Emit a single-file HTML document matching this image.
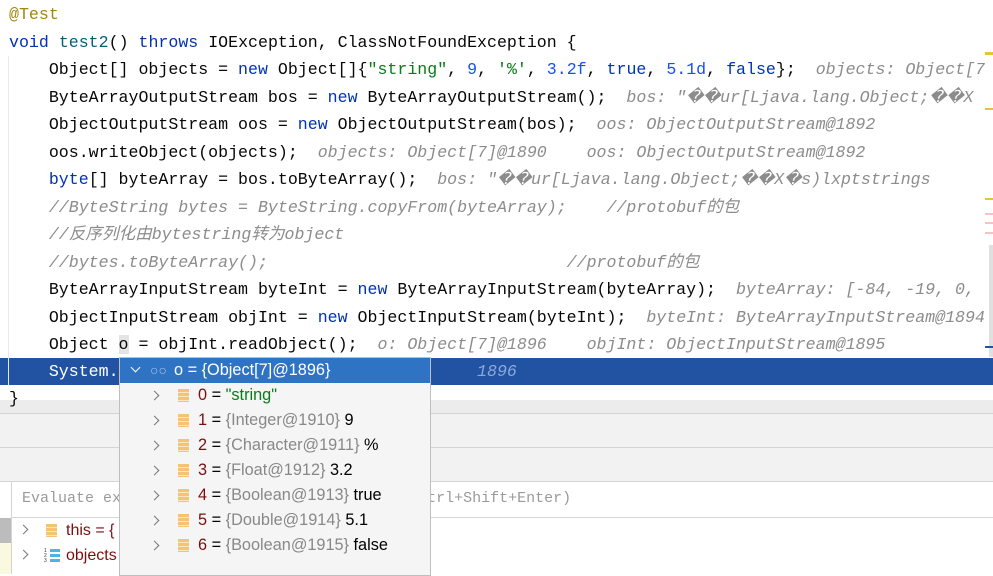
<!DOCTYPE html>
<html><head><meta charset="utf-8"><style>
body{margin:0;width:993px;height:574px;overflow:hidden;background:#fff;position:relative;font-family:"Liberation Mono",monospace;}
.l{position:absolute;left:9px;font-size:16.6px;white-space:pre;color:#080808;height:27px;line-height:27px;z-index:2}
.k{color:#0033b3}.s{color:#067d17}.n{color:#1750eb}.a{color:#9e880d}.c{color:#8c8c8c;font-style:italic}
.h{color:#8c8c8c;font-style:italic}
.pop{position:absolute;left:119px;top:357px;width:310px;height:217px;background:#f5f5f5;border:1px solid #bfbfbf;font-family:"Liberation Sans",sans-serif;font-size:16.3px;z-index:5}
.ph{height:25px;background:#2f73c4;color:#fff;line-height:25px;}
.r{height:25px;line-height:25px;position:relative;white-space:nowrap;}
.ar{position:absolute;width:6px;height:6px;border-right:1.5px solid #777;border-bottom:1.5px solid #777;transform:rotate(-45deg);}
.ic{position:absolute;left:58px;top:6px;width:11px;height:13px;background:repeating-linear-gradient(#f5c276 0 3px,#fde6c0 3px 4px);}
.t{position:absolute;left:78px}
.i{color:#7b0f0f}.g{color:#888}
</style></head><body>
<div style="position:absolute;left:0;top:358px;width:993px;height:27px;background:#2253a3"></div>
<div style="position:absolute;left:8px;top:56px;width:1px;height:330px;background:#e8e8e8"></div>
<div class="l" style="top:1px"><span class="a">@Test</span></div>
<div class="l" style="top:29px"><span class="k">void</span> <span style="color:#00627a">test2</span>() <span class="k">throws</span> IOException, ClassNotFoundException {</div>
<div class="l" style="top:56px">    Object[] objects = <span class="k">new</span> Object[]{<span class="s">"string"</span>, <span class="n">9</span>, <span class="s">'%'</span>, <span class="n">3.2f</span>, <span class="k">true</span>, <span class="n">5.1d</span>, <span class="k">false</span>};  <span class="h">objects: Object[7</span></div>
<div class="l" style="top:84px">    ByteArrayOutputStream bos = <span class="k">new</span> ByteArrayOutputStream();  <span class="h">bos: "��ur[Ljava.lang.Object;��X</span></div>
<div class="l" style="top:111px">    ObjectOutputStream oos = <span class="k">new</span> ObjectOutputStream(bos);  <span class="h">oos: ObjectOutputStream@1892</span></div>
<div class="l" style="top:139px">    oos.writeObject(objects);  <span class="h">objects: Object[7]@1890    oos: ObjectOutputStream@1892</span></div>
<div class="l" style="top:166px">    <span class="k">byte</span>[] byteArray = bos.toByteArray();  <span class="h">bos: "��ur[Ljava.lang.Object;��X�s)lxptstrings</span></div>
<div class="l" style="top:194px">    <span class="c">//ByteString bytes = ByteString.copyFrom(byteArray);    //protobuf的包</span></div>
<div class="l" style="top:221px">    <span class="c">//反序列化由bytestring转为object</span></div>
<div class="l" style="top:249px">    <span class="c">//bytes.toByteArray();                              //protobuf的包</span></div>
<div class="l" style="top:276px">    ByteArrayInputStream byteInt = <span class="k">new</span> ByteArrayInputStream(byteArray);  <span class="h">byteArray: [-84, -19, 0, </span></div>
<div class="l" style="top:304px">    ObjectInputStream objInt = <span class="k">new</span> ObjectInputStream(byteInt);  <span class="h">byteInt: ByteArrayInputStream@1894</span></div>
<div class="l" style="top:331px">    Object <span style="background:#e4e4e4">o</span> = objInt.readObject();  <span class="h">o: Object[7]@1896    objInt: ObjectInputStream@1895</span></div>
<div class="l" style="top:358px;color:#fff">    System.                                    <span style="font-style:italic;color:#8ca8d8">1896</span></div>
<div style="position:absolute;left:0;top:400px;width:993px;height:13px;background:#ececec"></div>
<div class="l" style="top:385px">}</div>
<div style="position:absolute;left:0;top:413px;width:993px;height:68px;background:#f2f2f2;border-top:1px solid #d4d4d4"></div>
<div style="position:absolute;left:0;top:447px;width:993px;height:1px;background:#d4d4d4"></div>
<div style="position:absolute;left:0;top:481px;width:993px;height:1px;background:#d4d4d4"></div>
<div style="position:absolute;left:11px;top:482px;width:1px;height:92px;background:#d4d4d4"></div>
<div style="position:absolute;left:12px;top:517px;width:981px;height:1px;background:#d4d4d4"></div>
<div style="position:absolute;left:0;top:518px;width:11px;height:25px;background:#bcbcbc"></div>
<div style="position:absolute;left:0;top:543px;width:11px;height:31px;background:#fbf8e0"></div>
<div class="l" style="top:485px;left:22px;font-size:15px;color:#9a9a9a">Evaluate ex                                  trl+Shift+Enter)</div>
<div style="position:absolute;left:0;top:518px;font-family:'Liberation Sans',sans-serif;font-size:16px;">
<div class="r" style="left:0"><span class="ar" style="left:20px;top:8px"></span><span class="ic" style="left:46px"></span><span style="position:absolute;left:66px" class="i">this = {</span></div>
<div class="r"><span class="ar" style="left:20px;top:8px"></span><span style="position:absolute;left:44px;top:6px;width:4px;height:14px;font-size:5px;line-height:5px;color:#333">1<br>2<br>3</span><span style="position:absolute;left:50px;top:6px;width:10px;height:13px;background:repeating-linear-gradient(#4fb3e6 0 3px,#fff 3px 5px)"></span><span style="position:absolute;left:66px" class="i">objects</span></div>
</div>
<div style="position:absolute;left:985px;top:52px;width:8px;height:3px;background:#e8c33a"></div>
<div style="position:absolute;left:985px;top:108px;width:8px;height:2px;background:#e8c33a"></div>
<div style="position:absolute;left:985px;top:198px;width:8px;height:2px;background:#e8c33a"></div>
<div style="position:absolute;left:985px;top:213px;width:8px;height:2px;background:#f6c4c4"></div>
<div style="position:absolute;left:985px;top:222px;width:8px;height:2px;background:#f6c4c4"></div>
<div style="position:absolute;left:985px;top:232px;width:8px;height:2px;background:#f6c4c4"></div>
<div style="position:absolute;left:989px;top:245px;width:4px;height:112px;background:#e0e0e0"></div>
<div style="position:absolute;left:985px;top:346px;width:8px;height:2px;background:#2253a3"></div>
<div class="pop">
<div class="ph" style="position:relative"><span style="position:absolute;left:12px;top:6px;width:6px;height:6px;border-right:1.5px solid #fff;border-bottom:1.5px solid #fff;transform:rotate(45deg)"></span><span style="position:absolute;left:30px;color:#aac4e8;font-size:14px">○○</span><span style="position:absolute;left:54px">o = {Object[7]@1896}</span></div>
<div class="r"><span class="ar" style="left:31px;top:9px"></span><span class="ic"></span><span class="t"><span class="i">0</span> = <span class="s">"string"</span></span></div>
<div class="r"><span class="ar" style="left:31px;top:9px"></span><span class="ic"></span><span class="t"><span class="i">1</span> = <span class="g">{Integer@1910}</span> 9</span></div>
<div class="r"><span class="ar" style="left:31px;top:9px"></span><span class="ic"></span><span class="t"><span class="i">2</span> = <span class="g">{Character@1911}</span> %</span></div>
<div class="r"><span class="ar" style="left:31px;top:9px"></span><span class="ic"></span><span class="t"><span class="i">3</span> = <span class="g">{Float@1912}</span> 3.2</span></div>
<div class="r"><span class="ar" style="left:31px;top:9px"></span><span class="ic"></span><span class="t"><span class="i">4</span> = <span class="g">{Boolean@1913}</span> true</span></div>
<div class="r"><span class="ar" style="left:31px;top:9px"></span><span class="ic"></span><span class="t"><span class="i">5</span> = <span class="g">{Double@1914}</span> 5.1</span></div>
<div class="r"><span class="ar" style="left:31px;top:9px"></span><span class="ic"></span><span class="t"><span class="i">6</span> = <span class="g">{Boolean@1915}</span> false</span></div>
</div>
</body></html>
